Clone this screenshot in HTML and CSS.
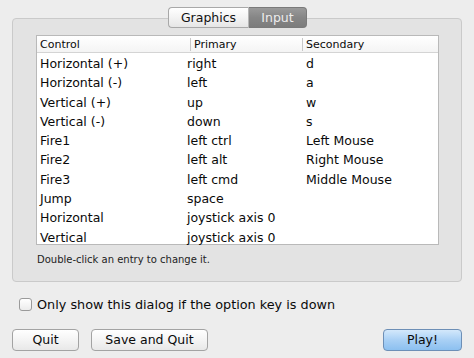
FILE: index.html
```html
<!DOCTYPE html>
<html>
<head>
<meta charset="utf-8">
<link rel="stylesheet" href="styles.css">
</head>
<body>
<div class="window">
  <div class="tabs">
    <div class="tab tab-first">Graphics</div>
    <div class="tab tab-last tab-selected">Input</div>
  </div>
  <div class="group">
    <div class="table">
      <div class="thead">
        <div class="th th-first">Control</div>
        <div class="th">Primary</div>
        <div class="th">Secondary</div>
      </div>
      <div class="tbody">
        <div class="row"><span>Horizontal (+)</span><span>right</span><span>d</span></div>
        <div class="row"><span>Horizontal (-)</span><span>left</span><span>a</span></div>
        <div class="row"><span>Vertical (+)</span><span>up</span><span>w</span></div>
        <div class="row"><span>Vertical (-)</span><span>down</span><span>s</span></div>
        <div class="row"><span>Fire1</span><span>left ctrl</span><span>Left Mouse</span></div>
        <div class="row"><span>Fire2</span><span>left alt</span><span>Right Mouse</span></div>
        <div class="row"><span>Fire3</span><span>left cmd</span><span>Middle Mouse</span></div>
        <div class="row"><span>Jump</span><span>space</span><span></span></div>
        <div class="row"><span>Horizontal</span><span>joystick axis 0</span><span></span></div>
        <div class="row"><span>Vertical</span><span>joystick axis 0</span><span></span></div>
      </div>
    </div>
    <div class="hint">Double-click an entry to change it.</div>
  </div>
  <label class="check-row">
    <span class="checkbox"></span>
    <span class="check-label">Only show this dialog if the option key is down</span>
  </label>
  <div class="buttons">
    <div class="btn btn-quit">Quit</div>
    <div class="btn btn-save">Save and Quit</div>
    <div class="spacer"></div>
    <div class="btn btn-play">Play!</div>
  </div>
</div>
</body>
</html>
```

FILE: styles.css
```css
html, body {
  margin: 0;
  padding: 0;
  background: #ececec;
}

body {
  font-family: "DejaVu Sans", "Liberation Sans", sans-serif;
  color: #0a0a0a;
  width: 474px;
  height: 358px;
  overflow: hidden;
}

.window {
  box-sizing: border-box;
  width: 474px;
  height: 358px;
  padding: 7px 12px 0 12px;
  background: #ededed;
}

.tabs {
  display: flex;
  justify-content: center;
  height: 21px;
  position: relative;
  z-index: 1;
  margin-left: 1px;
}

.tab {
  box-sizing: border-box;
  height: 21px;
  font-size: 12.5px;
  line-height: 19px;
  text-align: center;
  border: 1px solid #a8a8a8;
  background: linear-gradient(#ffffff, #f3f3f3 50%, #e6e6e6);
  color: #111;
}

.tab-first {
  width: 81px;
  border-radius: 4px 0 0 4px;
  border-right: 1px solid #b5b5b5;
}

.tab-last {
  width: 58px;
  border-left: none;
  border-radius: 0 4px 4px 0;
}

.tab-selected {
  background: linear-gradient(#9a9a9a, #868686 50%, #7c7c7c);
  border-color: #7a7a7a;
  color: #ededed;
}

.group {
  box-sizing: border-box;
  margin-top: -10px;
  height: 264px;
  border: 1px solid #cacaca;
  border-radius: 4px;
  background: #e3e3e3;
  padding: 16px 22px 0 23px;
}

.table {
  box-sizing: border-box;
  height: 210px;
  border: 1px solid #b9b9b9;
  background: #fff;
}

.thead {
  display: grid;
  grid-template-columns: 153px 112px 1fr;
  height: 16px;
  border-bottom: 1px solid #d4d4d4;
  background: linear-gradient(#ffffff, #f4f4f4);
  font-size: 11px;
  line-height: 16px;
}

.th {
  padding-left: 3px;
  border-left: 1px solid #c8c8c8;
  margin: 2px 0;
  line-height: 13px;
}

.th-first {
  border-left: none;
}

.tbody {
  padding-top: 1px;
}

.row {
  display: grid;
  grid-template-columns: 150px 119px 1fr;
  height: 19.3px;
  font-size: 12.5px;
  line-height: 19px;
}

.row span:first-child {
  padding-left: 3px;
}

.hint {
  font-size: 10px;
  color: #222;
  margin-top: 9px;
  padding-left: 1px;
}

.check-row {
  display: flex;
  align-items: center;
  height: 14px;
  margin-top: 15px;
  padding-left: 7px;
}

.checkbox {
  box-sizing: border-box;
  width: 13px;
  height: 13px;
  border: 1px solid #9a9a9a;
  border-radius: 3px;
  background: linear-gradient(#ffffff, #ececec);
  margin-right: 5px;
}

.check-label {
  font-size: 12.8px;
}

.buttons {
  display: flex;
  margin-top: 18px;
  height: 22px;
}

.btn {
  box-sizing: border-box;
  height: 22px;
  font-size: 12.5px;
  line-height: 20px;
  text-align: center;
  border: 1px solid #a3a3a3;
  border-radius: 4px;
  background: linear-gradient(#ffffff, #f4f4f4 50%, #e8e8e8);
}

.btn-quit {
  width: 67px;
}

.btn-save {
  width: 117px;
  margin-left: 12px;
}

.spacer {
  flex: 1;
}

.btn-play {
  width: 79px;
  border-color: #6d8fb6;
  background: linear-gradient(#d3e8fb, #a9d0f5 50%, #8cc0f0);
}
```
